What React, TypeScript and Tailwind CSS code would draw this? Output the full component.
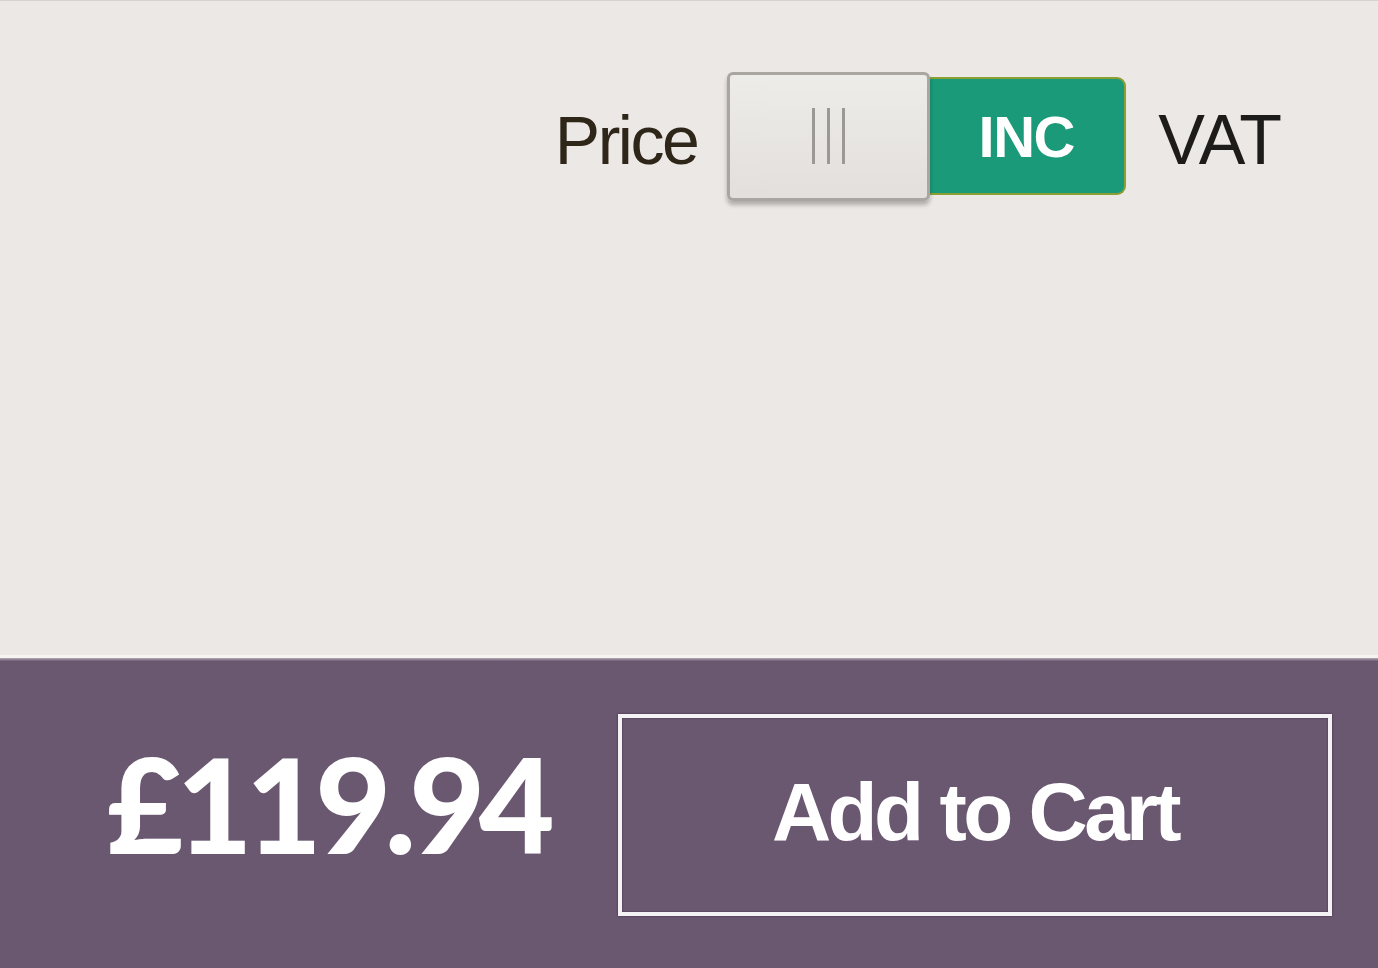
import React from "react";

export default function App() {
  return (
    <div className="w-[1378px] h-[968px] flex flex-col bg-[#ebe8e5] overflow-hidden" style={{ fontFamily: '"Liberation Sans", Arial, sans-serif' }}>
      <div className="h-[655px] border-t border-[#d6d2ce] flex justify-end items-start pr-[97px] pt-[70px]">
        <div className="flex items-center h-[130px]">
          <span className="text-[68px] leading-none text-[#2e2618] tracking-[-2.5px] mr-[30px] mt-[8px]">Price</span>
          <div className="relative flex items-center">
            <div className="w-[203px] h-[129px] rounded-[6px] border-[3px] border-[#a9a5a1] bg-gradient-to-b from-[#eeece9] to-[#e2dfdc] shadow-[0_4px_4px_rgba(0,0,0,0.25)] flex items-center justify-center gap-[12px] z-10">
              <span className="w-[3px] h-[56px] bg-[#9c9894]" />
              <span className="w-[3px] h-[56px] bg-[#9c9894]" />
              <span className="w-[3px] h-[56px] bg-[#9c9894]" />
            </div>
            <div className="w-[198px] h-[118px] -ml-[2px] rounded-r-[9px] border-[2px] border-l-0 border-[#8c9f35] bg-[#1a9a78] flex items-center justify-center">
              <span className="text-white font-bold text-[58px] leading-none tracking-[-1.5px] mt-[2px]">INC</span>
            </div>
          </div>
          <span className="text-[70px] leading-none text-[#1e1c1a] ml-[32px] mt-[8px] tracking-[-1px]">VAT</span>
        </div>
      </div>
      <div className="h-[3px] bg-[#f6f4f1]" />
      <div className="h-[3px] bg-gradient-to-b from-[#b7adb5] to-[#6f5d74]" />
      <div className="flex-1 bg-[#6a5770] flex items-center pl-[107px] pr-[46px]">
        <span className="text-white font-black text-[131px] leading-none tracking-[-0.05em] mt-[-22px]" style={{ fontFamily: 'Lato, "Liberation Sans", sans-serif' }}>£119.94</span>
        <div className="ml-auto w-[714px] h-[202px] border-[4px] border-[#f4f2f4] shadow-[0_0_2px_rgba(40,20,40,0.6),inset_0_0_2px_rgba(40,20,40,0.6)] flex items-center justify-center">
          <span className="text-white font-bold text-[82px] leading-none tracking-[-0.045em] mt-[-6px]">Add to Cart</span>
        </div>
      </div>
    </div>
  );
}
